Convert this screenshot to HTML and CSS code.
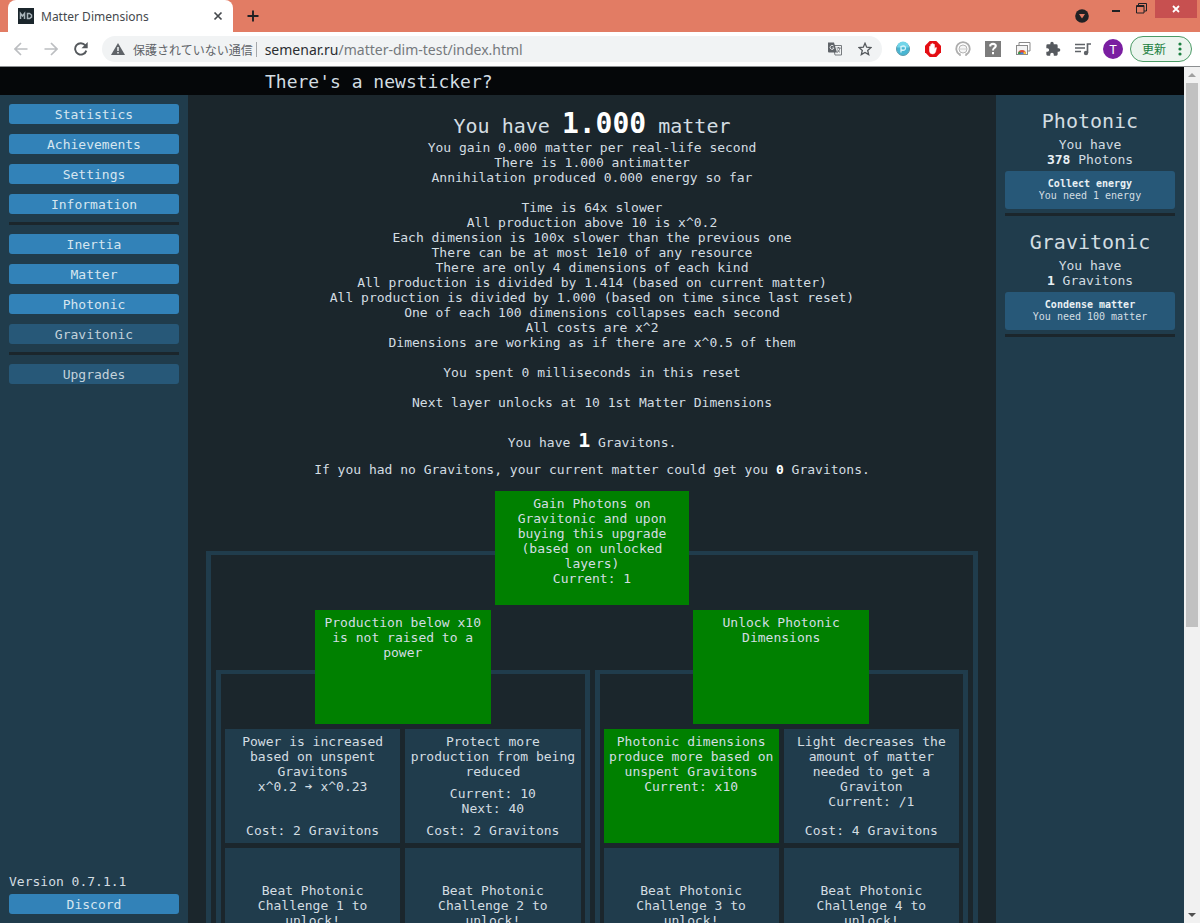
FILE: index.html
```html
<!DOCTYPE html>
<html lang="en">
<head>
<meta charset="utf-8">
<title>Matter Dimensions</title>
<link rel="stylesheet" href="styles.css">
</head>
<body>
<header class="browser">
  <div class="tabstrip">
    <div class="tab">
      <svg class="favicon" width="16" height="16" viewBox="0 0 16 16"><rect width="16" height="16" fill="#1b262c"/><path d="M2.500 11V5.500l2 2.500 2-2.500V11M9.500 5.500v5h2L13.500 9V7l-2-1.500z" fill="none" stroke="#a9b4ba" stroke-width="1.500"/></svg>
      <span class="tab-title">Matter Dimensions</span>
      <button class="icon-btn" aria-label="Close tab"><svg width="10" height="10" viewBox="0 0 10 10"><path d="M1.500 1.500l7 7M8.500 1.500l-7 7" stroke="#45494d" stroke-width="1.700"/></svg></button>
    </div>
    <button class="icon-btn new-tab" aria-label="New tab"><svg width="12" height="12" viewBox="0 0 12 12"><path d="M6 .5v11M.5 6h11" stroke="#202124" stroke-width="1.900"/></svg></button>
    <div class="window-controls">
      <button class="icon-btn search-tabs" aria-label="Search tabs"><svg width="14" height="14" viewBox="0 0 14 14"><circle cx="7" cy="7" r="6.800" fill="#202124"/><path d="M4 5h6L7 9.500z" fill="#e27c64"/></svg></button>
      <button class="icon-btn minimize" aria-label="Minimize"><svg width="8" height="12" viewBox="0 0 8 12"><path d="M0 9h8" stroke="#202124" stroke-width="2"/></svg></button>
      <button class="icon-btn restore" aria-label="Restore"><svg width="11" height="11" viewBox="0 0 11 11"><path d="M.5 2.500h7.500v7.500H.5zM.5 3.500H8M2.500 2.500V.5h8v7.500H8" fill="none" stroke="#202124"/></svg></button>
      <button class="icon-btn close" aria-label="Close"><svg width="8" height="8" viewBox="0 0 8 8"><path d="M1 1l6 6M7 1L1 7" stroke="#fff" stroke-width="1.800"/></svg></button>
    </div>
  </div>
  <div class="toolbar">
    <nav class="nav-buttons">
      <button class="icon-btn" aria-label="Back"><svg width="14" height="14" viewBox="0 0 14 14"><path d="M13.500 7H1.500M7 1L1 7l6 6" fill="none" stroke="#bcbec1" stroke-width="1.700"/></svg></button>
      <button class="icon-btn" aria-label="Forward"><svg width="14" height="14" viewBox="0 0 14 14"><path d="M.5 7h12M7 1l6 6-6 6" fill="none" stroke="#bcbec1" stroke-width="1.700"/></svg></button>
      <button class="icon-btn" aria-label="Reload"><svg width="14" height="14" viewBox="0 0 14 14"><path d="M12.300 8.600A5.700 5.700 0 1 1 11.300 3.300" fill="none" stroke="#54585c" stroke-width="1.900"/><path d="M13.700 0v6.200H7.500z" fill="#54585c"/></svg></button>
    </nav>
    <div class="address">
      <svg width="14" height="12" viewBox="0 0 14 12"><path d="M7 0l7 12H0z" fill="#5f6368"/><path d="M7 4v4M7 9v1.600" stroke="#f1f3f4" stroke-width="1.500"/></svg>
      <span class="insecure" lang="ja">保護されていない通信</span>
      <span class="url"><b>semenar.ru</b>/matter-dim-test/index.html</span>
      <button class="icon-btn" aria-label="Translate"><svg width="14" height="14" viewBox="0 0 14 14"><path d="M5 3.500h8.500v9.500H7z" fill="#f1f3f4" stroke="#777b7f"/><path d="M0 .5h6l3 10H1a1 1 0 0 1-1-1z" fill="#5f6368"/><path d="M5.500 4A2 2 0 1 0 6 6H4.300" fill="none" stroke="#e0e2e4"/><path d="M8.600 6h4M10.500 5v1M12 6c-.5 2-1.500 3.500-3 4.500M9.500 7.500c.8 1.500 1.500 2.300 2.500 3" fill="none" stroke="#65696d" stroke-width=".9"/></svg></button>
      <button class="icon-btn" aria-label="Bookmark"><svg width="14" height="14" viewBox="0 0 14 14"><path d="M7 1.300l1.700 3.900 4.200.4-3.200 2.800 1 4.200L7 10.400l-3.700 2.200 1-4.200L1.100 5.600l4.200-.4z" fill="none" stroke="#55595d" stroke-width="1.300"/></svg></button>
    </div>
    <div class="extensions">
      <button class="icon-btn" aria-label="Extension P"><svg width="16" height="16" viewBox="0 0 16 16"><circle cx="8" cy="8" r="6.500" fill="#48b5d2" stroke="#5e9bab"/><path d="M2 6.500a6 6 0 0 1 12 0" fill="#72d5e9"/><path d="M6 11.500V5.500q4.500-1.500 4.500 1.500T6.500 9" fill="none" stroke="#d8f4fa" stroke-width="1.300"/></svg></button>
      <button class="icon-btn" aria-label="Ad blocker"><svg width="16" height="16" viewBox="0 0 16 16"><path d="M4.700 0h6.600L16 4.700v6.600L11.300 16H4.700L0 11.300V4.700z" fill="#e40d13"/><path d="M4.500 8V5.500q.6-.7 1.200 0V7 3.500q.6-.8 1.200 0V7 2.800q.7-.8 1.300 0V7 3.500q.7-.8 1.300 0V8l1.200-1.500q.9-.2.8.5L10.500 11q-.8 2-2.800 2-3 0-3.200-3z" fill="#fff" stroke="#fff" stroke-width=".5"/></svg></button>
      <button class="icon-btn" aria-label="Extension ring"><svg width="16" height="16" viewBox="0 0 16 16"><path d="M4.500 13.500A6.700 6.700 0 1 1 11.500 13.500" fill="none" stroke="#adadad" stroke-width="1.800"/><path d="M5 15v-2.500M11 15v-2.500" stroke="#888"/><circle cx="8" cy="8" r="4" fill="#f6f6f6" stroke="#b5b5b5"/><path d="M5.500 8h5" stroke="#a5a5a5" stroke-dasharray="1 1"/></svg></button>
      <button class="icon-btn" aria-label="Help extension"><svg width="16" height="16" viewBox="0 0 16 16"><rect width="16" height="16" fill="#7c7c7c"/><path d="M5.300 5.500V4q2.700-2.200 5.200-.2 1 2-1.300 3.200Q8 7.800 8 9.500M8 11v2.200" fill="none" stroke="#fff" stroke-width="2"/></svg></button>
      <button class="icon-btn" aria-label="Screen extension"><svg width="16" height="16" viewBox="0 0 16 16"><path d="M4 4V1.500h11v8.500h-2" fill="none" stroke="#8a8a8a"/><rect x="1.500" y="4.500" width="11" height="9" fill="#f4f4f4" stroke="#8a8a8a"/><path d="M3 13a4 4 0 0 1 8 0z" fill="#de4b37"/><path d="M3 13a4 4 0 0 1 1.200-2.800L7 13z" fill="#2f9e54"/><path d="M11 13a4 4 0 0 0-1.200-2.800L7 13z" fill="#f5c638"/><path d="M5.300 13a1.700 1.700 0 0 1 3.400 0z" fill="#3f7fea"/></svg></button>
      <button class="icon-btn" aria-label="Extensions"><svg width="16" height="16" viewBox="0 0 24 24"><path d="M20.500 11H19V7a2 2 0 0 0-2-2h-4V3.500a2.500 2.500 0 0 0-5 0V5H4a2 2 0 0 0-2 2v3.800h1.500a2.700 2.700 0 0 1 0 5.400H2V20a2 2 0 0 0 2 2h3.800v-1.500a2.700 2.700 0 0 1 5.400 0V22H17a2 2 0 0 0 2-2v-4h1.500a2.500 2.500 0 0 0 0-5z" fill="#55595e"/></svg></button>
      <button class="icon-btn" aria-label="Media"><svg width="16" height="16" viewBox="0 0 16 16"><path d="M0 3.500h10M0 7h10M0 10.500h6M12.500 12V3H16" fill="none" stroke="#5f6368" stroke-width="1.700"/><circle cx="11" cy="12" r="2.200" fill="#5f6368"/></svg></button>
    </div>
    <button class="avatar">T</button>
    <button class="update"><span lang="ja">更新</span><svg width="4" height="14" viewBox="0 0 4 14"><g fill="#1b8040"><circle cx="2" cy="2" r="1.600"/><circle cx="2" cy="7" r="1.600"/><circle cx="2" cy="12" r="1.600"/></g></svg></button>
  </div>
</header>

<div class="viewport">
  <div class="page">
    <div class="ticker">There's a newsticker?</div>
    <div class="columns">
      <nav class="side">
        <div class="menu">
          <button class="menu-btn">Statistics</button>
          <button class="menu-btn">Achievements</button>
          <button class="menu-btn">Settings</button>
          <button class="menu-btn">Information</button>
        </div>
        <hr class="rule">
        <div class="menu">
          <button class="menu-btn">Inertia</button>
          <button class="menu-btn">Matter</button>
          <button class="menu-btn">Photonic</button>
          <button class="menu-btn dim">Gravitonic</button>
        </div>
        <hr class="rule">
        <div class="menu">
          <button class="menu-btn dim">Upgrades</button>
        </div>
        <div class="side-foot">
          <span>Version 0.7.1.1</span>
          <button class="menu-btn">Discord</button>
        </div>
      </nav>

      <main class="main">
        <h1 class="matter">You have <b>1.000</b> matter</h1>
        <p class="lines">You gain 0.000 matter per real-life second<br>There is 1.000 antimatter<br>Annihilation produced 0.000 energy so far</p>
        <p class="lines">Time is 64x slower<br>All production above 10 is x^0.2<br>Each dimension is 100x slower than the previous one<br>There can be at most 1e10 of any resource<br>There are only 4 dimensions of each kind<br>All production is divided by 1.414 (based on current matter)<br>All production is divided by 1.000 (based on time since last reset)<br>One of each 100 dimensions collapses each second<br>All costs are x^2<br>Dimensions are working as if there are x^0.5 of them</p>
        <p class="lines">You spent 0 milliseconds in this reset</p>
        <p class="lines">Next layer unlocks at 10 1st Matter Dimensions</p>
        <p class="gravitons">You have <b>1</b> Gravitons.</p>
        <p class="lines">If you had no Gravitons, your current matter could get you <b>0</b> Gravitons.</p>

        <section class="frame outer">
          <button class="node bought root"><span>Gain Photons on<br>Gravitonic and upon<br>buying this upgrade<br>(based on unlocked<br>layers)<br>Current: 1</span></button>
          <div class="branches">
            <div class="frame">
              <button class="node bought parent"><span>Production below x10<br>is not raised to a<br>power</span></button>
              <div class="cells">
                <button class="node"><span>Power is increased<br>based on unspent<br>Gravitons<br>x^0.2 <b>➔</b> x^0.23</span><span>Cost: 2 Gravitons</span></button>
                <button class="node"><span>Protect more<br>production from being<br>reduced</span><span>Current: 10<br>Next: 40</span><span>Cost: 2 Gravitons</span></button>
                <button class="node locked" disabled><span>Beat Photonic<br>Challenge 1 to<br>unlock!</span></button>
                <button class="node locked" disabled><span>Beat Photonic<br>Challenge 2 to<br>unlock!</span></button>
              </div>
            </div>
            <div class="frame">
              <button class="node bought parent"><span>Unlock Photonic<br>Dimensions</span></button>
              <div class="cells">
                <button class="node bought"><span>Photonic dimensions<br>produce more based on<br>unspent Gravitons<br>Current: x10</span></button>
                <button class="node"><span>Light decreases the<br>amount of matter<br>needed to get a<br>Graviton<br>Current: /1</span><span>Cost: 4 Gravitons</span></button>
                <button class="node locked" disabled><span>Beat Photonic<br>Challenge 3 to<br>unlock!</span></button>
                <button class="node locked" disabled><span>Beat Photonic<br>Challenge 4 to<br>unlock!</span></button>
              </div>
            </div>
          </div>
        </section>
      </main>

      <aside class="side resources">
        <h2>Photonic</h2>
        <p>You have<br><b>378</b> Photons</p>
        <button class="reset"><b>Collect energy</b><span>You need 1 energy</span></button>
        <hr class="rule">
        <h2>Gravitonic</h2>
        <p>You have<br><b>1</b> Gravitons</p>
        <button class="reset"><b>Condense matter</b><span>You need 100 matter</span></button>
        <hr class="rule">
      </aside>
    </div>
  </div>
  <div class="scrollbar">
    <svg width="8" height="4" viewBox="0 0 8 4"><path d="M0 4l4-4 4 4z" fill="#a0a0a0"/></svg>
    <div class="track"><div class="thumb"></div></div>
    <svg width="8" height="4" viewBox="0 0 8 4"><path d="M0 0l4 4 4-4z" fill="#505050"/></svg>
  </div>
</div>
</body>
</html>
```
FILE: styles.css
```css
* { box-sizing: border-box; }

body {
  margin: 0;
  height: 100vh;
  display: flex;
  flex-direction: column;
  overflow: hidden;
  background: #1b262c;
  color: #d3dde2;
  font: 13px/15px "DejaVu Sans Mono", monospace;
}

button {
  font: inherit;
  color: inherit;
  border: 0;
  padding: 0;
  margin: 0;
  background: none;
}

p, h1, h2 { margin: 0; font-weight: normal; }

/* Browser frame */
.browser {
  flex: none;
  font-family: "Noto Sans", "Noto Sans CJK JP", sans-serif;
  background: #fff;
  border-bottom: 1px solid #8c8f91;
}

.icon-btn { display: flex; align-items: center; justify-content: center; flex: none; }

.tabstrip {
  height: 32px;
  display: flex;
  padding-left: 8px;
  background: #e27c64;
}

.tab {
  width: 225px;
  display: flex;
  align-items: center;
  padding: 0 10px;
  gap: 7px;
  border-radius: 8px 8px 0 0;
  background: #fff;
}

.tab-title { flex: 1; font-size: 12px; color: #45494d; }
.new-tab { width: 40px; }

.window-controls { margin-left: auto; display: flex; align-items: flex-start; padding-right: 3px; }
.search-tabs { height: 32px; margin-right: 23px; }
.minimize { height: 16px; margin-right: 16px; }
.restore { height: 17px; margin-right: 8px; }
.close { width: 42px; height: 18px; background: #c75050; }

.toolbar { height: 34px; display: flex; align-items: center; padding: 0 8px 0 14px; }
.nav-buttons { display: flex; gap: 16px; margin-right: 14px; }

.address {
  flex: 1;
  height: 26px;
  display: flex;
  align-items: center;
  gap: 8px;
  padding: 0 10px 0 9px;
  border-radius: 13px;
  background: #f1f3f4;
}

.address .icon-btn { margin-left: 8px; }
.insecure { padding-right: 3px; border-right: 1px solid #a5a8ab; font-size: 12px; color: #5f6368; font-family: "Noto Sans CJK JP", sans-serif; }
.url { flex: 1; font-size: 14px; color: #75797d; }
.url b { font-weight: normal; color: #2b2e31; }

.extensions { display: flex; gap: 14px; margin: 0 12px 0 13px; }

.avatar { width: 20px; height: 20px; border-radius: 10px; background: #7a1ea1; color: #fff; }

.update {
  height: 26px;
  width: 62px;
  margin-left: 7px;
  display: flex;
  align-items: center;
  justify-content: space-between;
  padding: 0 9px 0 11px;
  border: 1px solid #4b9b66;
  border-radius: 13px;
  background: #ebf4ee;
  color: #1b8040;
  font-size: 12px;
}

/* Game page */
.viewport { flex: 1; min-height: 0; display: flex; }
.page { flex: 1; min-width: 0; display: flex; flex-direction: column; }

.ticker {
  flex: none;
  padding: 2px 0 0 265px;
  font-size: 18px;
  line-height: 26px;
  background: #050709;
}

.columns { flex: 1; min-height: 0; display: grid; grid-template-columns: 188px minmax(0, 1fr) 188px; }

.side {
  display: flex;
  flex-direction: column;
  padding: 9px;
  background: #203c4c;
}

.menu { display: flex; flex-direction: column; gap: 10px; }

.menu-btn { height: 20px; border-radius: 3px; background: #3282b8; color: #d6e6f0; }
.menu-btn.dim { background: #275878; color: #c3d2db; }

.rule { width: 100%; height: 3px; margin: 8px 0 9px; border: 0; background: #1b262c; }

.side-foot { margin-top: auto; display: flex; flex-direction: column; gap: 5px; }

.main { overflow: hidden; text-align: center; padding: 15px 18px 0; }

.matter { font-size: 20px; line-height: 27px; }
.matter b { font-size: 28px; color: #fff; }

.lines + .lines { margin-top: 15px; }
.lines b { color: #fff; }

.gravitons { line-height: 22px; margin: 19px 0 8px; }
.gravitons b { font-size: 20px; color: #fff; }

/* Upgrade tree */
.frame { padding: 0 4px; border: 5px solid #203c4c; border-top-width: 4px; min-width: 0; }
.frame.outer { margin-top: 74px; padding: 0 5px; }

.branches { display: grid; grid-template-columns: 1fr 1fr; gap: 5px; margin-top: 65px; }
.cells { display: grid; grid-template-columns: 1fr 1fr; gap: 5px; margin-top: 5px; }

.node {
  height: 114px;
  display: flex;
  flex-direction: column;
  align-items: center;
  justify-content: space-between;
  padding: 5px 0;
  background: #203c4c;
  white-space: nowrap;
}

.node.bought { background: #008000; }
.node.locked { justify-content: center; }
.root, .parent { margin: -64px auto 0; }
.root { width: 194px; }
.parent { width: calc(50% - 2px); }

/* Resources */
.resources { text-align: center; padding-top: 10px; }
.resources h2 { font-size: 20px; line-height: 32px; }
.resources b { color: #e9f0f4; }
.resources .rule { margin: 4px 0 10px; }

.reset {
  display: flex;
  flex-direction: column;
  align-items: center;
  margin-top: 4px;
  padding: 7px 0;
  border-radius: 3px;
  font-size: 10px;
  line-height: 12px;
  background: #275878;
}

/* Scrollbar */
.scrollbar {
  width: 16px;
  display: flex;
  flex-direction: column;
  align-items: center;
  gap: 6px;
  padding: 6px 0;
  background: #f1f1f1;
}

.track { flex: 1; width: 12px; }
.thumb { height: 66%; background: #c1c1c1; }
```
